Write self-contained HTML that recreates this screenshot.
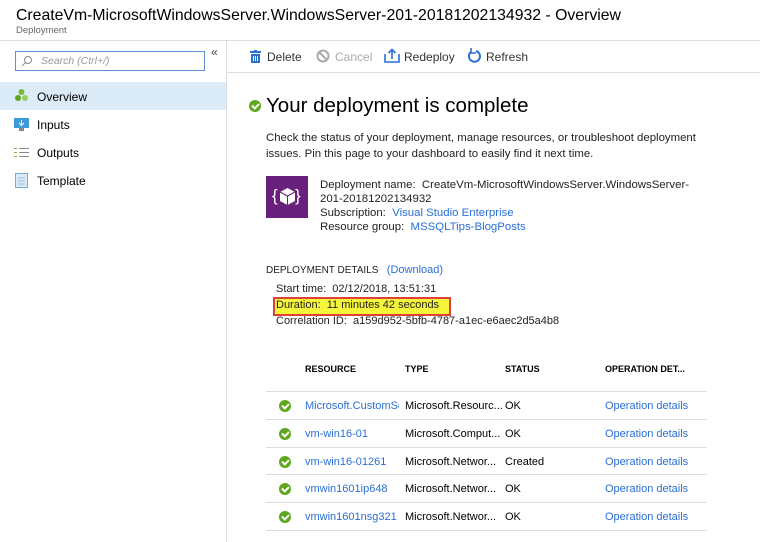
<!DOCTYPE html>
<html><head><style>
*{margin:0;padding:0;box-sizing:border-box}
body{width:760px;height:542px;overflow:hidden;background:#fff;font-family:"Liberation Sans",sans-serif;color:#000;position:relative;font-size:12px}
.a{position:absolute;white-space:nowrap}
.lnk{color:#2a6fd6}
.chk{position:absolute;width:12px;height:12px;border-radius:50%;background:#5ea71d}
.chk:after{content:"";position:absolute;left:3px;top:2.5px;width:5px;height:3px;border-left:2px solid #fff;border-bottom:2px solid #fff;transform:rotate(-45deg)}
.row{position:absolute;left:266px;width:441px;height:28px;border-top:1px solid #ddd}
.row span{position:absolute;top:8px;font-size:11px;white-space:nowrap;overflow:hidden}
</style></head><body>
<div class="a" style="left:16px;top:7px;font-size:15.8px;">CreateVm-MicrosoftWindowsServer.WindowsServer-201-20181202134932 - Overview</div>
<div class="a" style="left:16px;top:25px;font-size:9.5px;color:#666">Deployment</div>
<div class="a" style="left:0;top:40px;width:760px;border-top:1px solid #ddd"></div>
<div class="a" style="left:226px;top:40px;height:502px;border-left:1px solid #ddd"></div>
<div class="a" style="left:15px;top:51px;width:190px;height:20px;border:1px solid #5b8fd6"></div>
<svg class="a" style="left:21px;top:55px" width="12" height="12"><circle cx="7" cy="5" r="3.5" fill="none" stroke="#888"/><line x1="4.5" y1="7.5" x2="1" y2="11" stroke="#888"/></svg>
<div class="a" style="left:41px;top:55px;font-size:10.5px;color:#999;font-style:italic">Search (Ctrl+/)</div>
<div class="a" style="left:211px;top:45px;font-size:12px;color:#444">«</div>
<div class="a" style="left:0;top:82px;width:226px;height:28px;background:#dcebf8"></div>
<svg class="a" style="left:14px;top:88px" width="15" height="14"><circle cx="7.5" cy="4" r="3" fill="#7bb73a"/><circle cx="4" cy="10" r="3" fill="#5ea71d"/><circle cx="11" cy="10" r="3" fill="#9acd5a"/></svg>
<div class="a" style="left:37px;top:90px;font-size:12px">Overview</div>
<svg class="a" style="left:14px;top:118px" width="15" height="14"><rect x="0" y="0" width="15" height="10" fill="#3c9ad8"/><rect x="5" y="10" width="5" height="3" fill="#888"/><path d="M7.5 2v5M5 5l2.5 2.5L10 5" stroke="#fff" fill="none"/></svg>
<div class="a" style="left:37px;top:118px;font-size:12px">Inputs</div>
<svg class="a" style="left:14px;top:147px" width="15" height="12"><g stroke="#888"><line x1="5" y1="1.5" x2="15" y2="1.5"/><line x1="5" y1="5.5" x2="15" y2="5.5"/><line x1="5" y1="9.5" x2="15" y2="9.5"/></g><g stroke="#7bb73a"><line x1="0" y1="1.5" x2="3" y2="1.5"/><line x1="0" y1="5.5" x2="3" y2="5.5"/><line x1="0" y1="9.5" x2="3" y2="9.5"/></g></svg>
<div class="a" style="left:37px;top:146px;font-size:12px">Outputs</div>
<svg class="a" style="left:15px;top:173px" width="13" height="15"><rect x="0.5" y="0.5" width="12" height="14" fill="#dceaf8" stroke="#7aa9d8"/><g stroke="#9bbde0"><line x1="3" y1="5" x2="10" y2="5"/><line x1="3" y1="8" x2="10" y2="8"/><line x1="3" y1="11" x2="10" y2="11"/></g></svg>
<div class="a" style="left:37px;top:174px;font-size:12px">Template</div>
<div class="a" style="left:227px;top:72px;width:533px;border-top:1px solid #ddd"></div>
<svg class="a" style="left:250px;top:50px" width="11" height="13"><rect x="0" y="1" width="11" height="2" fill="#2a6fd6"/><rect x="4" y="0" width="3" height="1" fill="#2a6fd6"/><rect x="1" y="4" width="9" height="9" fill="#2a6fd6"/><g stroke="#fff"><line x1="3.5" y1="6" x2="3.5" y2="11"/><line x1="5.5" y1="6" x2="5.5" y2="11"/><line x1="7.5" y1="6" x2="7.5" y2="11"/></g></svg>
<div class="a" style="left:267px;top:50px;font-size:12px;color:#333">Delete</div>
<svg class="a" style="left:316px;top:49px" width="14" height="14"><circle cx="7" cy="7" r="5.5" fill="none" stroke="#aaa" stroke-width="2"/><line x1="3" y1="3" x2="11" y2="11" stroke="#aaa" stroke-width="2"/></svg>
<div class="a" style="left:335px;top:50px;font-size:12px;color:#aaa">Cancel</div>
<svg class="a" style="left:384px;top:48px" width="16" height="15"><path d="M1 6v8h14V6" fill="none" stroke="#2a6fd6" stroke-width="1.6"/><path d="M8 11V2M4.5 5L8 1.5 11.5 5" fill="none" stroke="#2a6fd6" stroke-width="1.6"/></svg>
<div class="a" style="left:404px;top:50px;font-size:12px;color:#333">Redeploy</div>
<svg class="a" style="left:467px;top:48px" width="14" height="15"><path d="M4 4A5.5 5.5 0 1 0 9 3" fill="none" stroke="#2a6fd6" stroke-width="2"/><path d="M4 0v5h5" fill="none" stroke="#2a6fd6" stroke-width="1.6"/></svg>
<div class="a" style="left:486px;top:50px;font-size:12px;color:#333">Refresh</div>
<div class="chk" style="left:249px;top:100px"></div>
<div class="a" style="left:266px;top:94px;font-size:20.5px">Your deployment is complete</div>
<div class="a" style="left:266px;top:130px;font-size:11.4px;line-height:16px;color:#222">Check the status of your deployment, manage resources, or troubleshoot deployment<br>issues. Pin this page to your dashboard to easily find it next time.</div>
<div class="a" style="left:266px;top:176px;width:42px;height:42px;background:#68217a"></div>
<div class="a" style="left:272px;top:186px;font-size:17px;color:#fff">{</div>
<div class="a" style="left:295px;top:186px;font-size:17px;color:#fff">}</div>
<svg class="a" style="left:280px;top:188px" width="15" height="17"><path d="M7.5 0L15 4v9l-7.5 4L0 13V4z" fill="#fff"/><path d="M0 4l7.5 4 7.5-4M7.5 8v9" stroke="#68217a" fill="none"/></svg>
<div class="a" style="left:320px;top:178px;font-size:11.4px;line-height:14px;color:#222">Deployment name:&nbsp; CreateVm-MicrosoftWindowsServer.WindowsServer-<br>201-20181202134932<br>Subscription:&nbsp; <span class="lnk">Visual Studio Enterprise</span><br>Resource group:&nbsp; <span class="lnk">MSSQLTips-BlogPosts</span></div>
<div class="a" style="left:266px;top:264px;font-size:10px;color:#222">DEPLOYMENT DETAILS&nbsp;&nbsp; <span class="lnk" style="font-size:11px">(Download)</span></div>
<div class="a" style="left:276px;top:283px;font-size:11px;color:#222">Start time:&nbsp; 02/12/2018, 13:51:31</div>
<div class="a" style="left:273px;top:297px;width:178px;height:19px;background:#f5f53a;border:2px solid #e0403a"></div>
<div class="a" style="left:276px;top:299px;font-size:11px;color:#222">Duration:&nbsp; 11 minutes 42 seconds</div>
<div class="a" style="left:276px;top:315px;font-size:11px;color:#222">Correlation ID:&nbsp; a159d952-5bfb-4787-a1ec-e6aec2d5a4b8</div>
<div class="a" style="left:305px;top:364px;font-size:9px;font-weight:bold">RESOURCE</div>
<div class="a" style="left:405px;top:364px;font-size:9px;font-weight:bold">TYPE</div>
<div class="a" style="left:505px;top:364px;font-size:9px;font-weight:bold">STATUS</div>
<div class="a" style="left:605px;top:364px;font-size:9px;font-weight:bold">OPERATION DET...</div>
<div class="row" style="top:391px"><div class="chk" style="left:13px;top:8px"></div><span class="lnk" style="left:39px;width:94px">Microsoft.CustomScriptExtension</span><span style="left:139px">Microsoft.Resourc...</span><span style="left:239px">OK</span><span class="lnk" style="left:339px">Operation details</span></div>
<div class="row" style="top:419px"><div class="chk" style="left:13px;top:8px"></div><span class="lnk" style="left:39px">vm-win16-01</span><span style="left:139px">Microsoft.Comput...</span><span style="left:239px">OK</span><span class="lnk" style="left:339px">Operation details</span></div>
<div class="row" style="top:447px"><div class="chk" style="left:13px;top:8px"></div><span class="lnk" style="left:39px">vm-win16-01261</span><span style="left:139px">Microsoft.Networ...</span><span style="left:239px">Created</span><span class="lnk" style="left:339px">Operation details</span></div>
<div class="row" style="top:474px"><div class="chk" style="left:13px;top:8px"></div><span class="lnk" style="left:39px">vmwin1601ip648</span><span style="left:139px">Microsoft.Networ...</span><span style="left:239px">OK</span><span class="lnk" style="left:339px">Operation details</span></div>
<div class="row" style="top:502px"><div class="chk" style="left:13px;top:8px"></div><span class="lnk" style="left:39px">vmwin1601nsg321</span><span style="left:139px">Microsoft.Networ...</span><span style="left:239px">OK</span><span class="lnk" style="left:339px">Operation details</span></div>
<div class="a" style="left:266px;top:530px;width:441px;border-top:1px solid #ddd"></div>
</body></html>
